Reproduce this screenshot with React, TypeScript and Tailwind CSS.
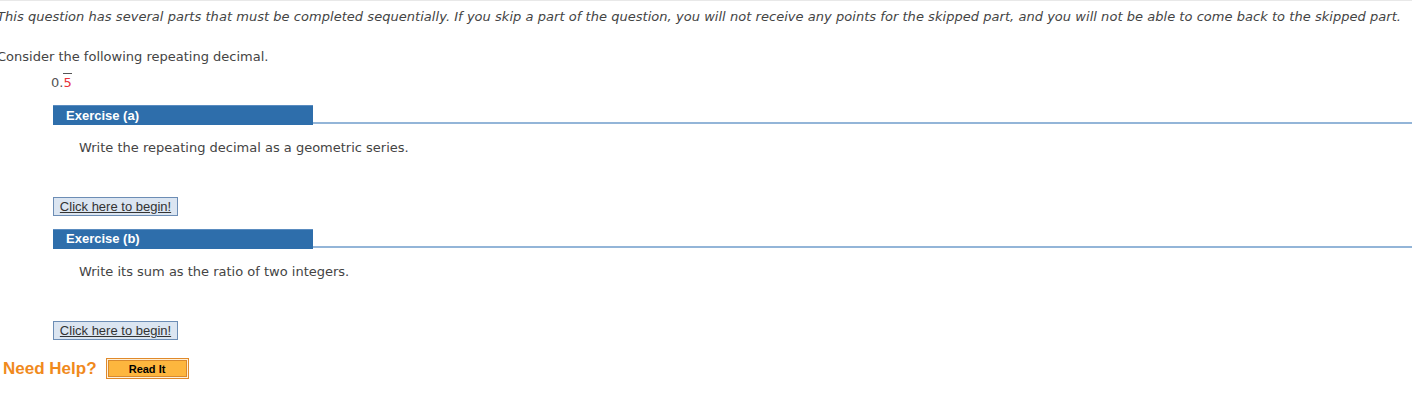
import React from "react";

const verdana = { fontFamily: '"DejaVu Sans", Verdana, sans-serif' };

function ExerciseBar({ label }: { label: string }) {
  return (
    <div className="flex items-end">
      <div className="w-[260px] h-[20px] bg-[#2e6eab] border-t border-[#5a8cc0] flex items-center pl-[13px] text-white font-bold text-[13px] font-['Liberation_Sans',Arial,sans-serif]">
        {label}
      </div>
      <div className="flex-1 h-[2px] mb-[1px] bg-[#93b5d8]" />
    </div>
  );
}

function BeginButton() {
  return (
    <button className="h-[19px] w-[125px] bg-[#dbe5f1] border border-[#6c8db5] text-[#333] text-[13px] underline leading-none font-['Liberation_Sans',Arial,sans-serif]">
      Click here to begin!
    </button>
  );
}

export default function App() {
  return (
    <div className="bg-white w-[1412px] h-[417px] overflow-hidden border-t border-[#e8e8e8] text-[#444]">
      <div className="-ml-[3px]">
        <p className="italic text-[13px] tracking-[0.04px] mt-[6px] whitespace-nowrap" style={verdana}>
          This question has several parts that must be completed sequentially. If you skip a part of the question, you will not receive any points for the skipped part, and you will not be able to come back to the skipped part.
        </p>
        <p className="text-[13px] mt-[20px]" style={verdana}>
          Consider the following repeating decimal.
        </p>
        <div className="ml-[54px] mt-[9px] text-[13px] leading-[16px] text-[#555]" style={verdana}>
          0.<span className="text-[#e8303a] border-t border-[#555] pt-[1px]">5</span>
        </div>
      </div>
      <div className="ml-[53px] mt-[14px]">
        <ExerciseBar label="Exercise (a)" />
        <p className="ml-[26px] mt-[13px] text-[13px]" style={verdana}>
          Write the repeating decimal as a geometric series.
        </p>
        <div className="mt-[35px]">
          <BeginButton />
        </div>
        <div className="mt-[12px]">
          <ExerciseBar label="Exercise (b)" />
        </div>
        <p className="ml-[26px] mt-[13px] text-[13px]" style={verdana}>
          Write its sum as the ratio of two integers.
        </p>
        <div className="mt-[36px]">
          <BeginButton />
        </div>
      </div>
      <div className="flex items-center mt-[15px] ml-[3px] gap-[9px]">
        <span className="text-[#f08a1d] font-bold text-[17px] font-['Liberation_Sans',Arial,sans-serif]">
          Need Help?
        </span>
        <button className="w-[83px] h-[21px] border border-[#e0892a] bg-[#fff0d8] p-[1px]">
          <div className="h-full w-full bg-[#fdb63e] border border-[#d8892d] flex items-center justify-center text-black font-bold text-[11px] font-['Liberation_Sans',Arial,sans-serif]">
            Read It
          </div>
        </button>
      </div>
    </div>
  );
}
